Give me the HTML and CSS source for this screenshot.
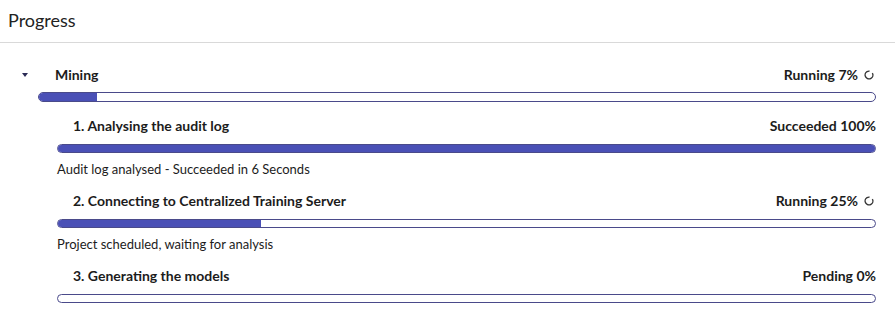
FILE: index.html
```html
<!DOCTYPE html>
<html>
<head>
<meta charset="utf-8">
<link rel="stylesheet" href="styles.css">
</head>
<body>
<div class="header">Progress</div>
<div class="group">
  <div class="caret-col"><span class="caret"></span></div>
  <div class="group-body">
    <div class="row-head">
      <span class="title main-title">Mining</span>
      <span class="status">Running 7%<svg class="spin" width="10" height="10" viewBox="0 0 10 10"><circle cx="5" cy="5" r="3.9" fill="none" stroke="#333" stroke-width="1.4" stroke-dasharray="20.5 4" transform="rotate(-30 5 5)"/></svg></span>
    </div>
    <div class="bar big"><div class="fill" style="width:7%"></div></div>

    <div class="steps">
      <div class="step">
        <div class="row-head">
          <span class="title step-title">1. Analysing the audit log</span>
          <span class="status">Succeeded 100%</span>
        </div>
        <div class="bar"><div class="fill full" style="width:100%"></div></div>
        <div class="desc">Audit log analysed - Succeeded in 6 Seconds</div>
      </div>
      <div class="step">
        <div class="row-head">
          <span class="title step-title">2. Connecting to Centralized Training Server</span>
          <span class="status">Running 25%<svg class="spin" width="10" height="10" viewBox="0 0 10 10"><circle cx="5" cy="5" r="3.9" fill="none" stroke="#333" stroke-width="1.4" stroke-dasharray="20.5 4" transform="rotate(-30 5 5)"/></svg></span>
        </div>
        <div class="bar"><div class="fill" style="width:25%"></div></div>
        <div class="desc">Project scheduled, waiting for analysis</div>
      </div>
      <div class="step">
        <div class="row-head">
          <span class="title step-title">3. Generating the models</span>
          <span class="status">Pending 0%</span>
        </div>
        <div class="bar"><div class="fill" style="width:0%"></div></div>
      </div>
    </div>
  </div>
</div>
</body>
</html>
```
FILE: styles.css
```css
* { box-sizing: border-box; }
body {
  margin: 0;
  background: #fff;
  font-family: Lato, "Open Sans", sans-serif;
  color: #1c1c1c;
}
.header {
  height: 43px;
  border-bottom: 1px solid #d9d9d9;
  padding-left: 8px;
  font-size: 18px;
  line-height: 40px;
  color: #222;
}
.group {
  display: flex;
  padding: 22px 19px 0 22px;
}
.caret-col {
  width: 16px;
  flex: none;
  padding-top: 8px;
}
.caret {
  display: block;
  width: 0;
  height: 0;
  border-left: 3.5px solid transparent;
  border-right: 3.5px solid transparent;
  border-top: 4.5px solid #2b2b55;
}
.group-body { flex: 1; }
.row-head {
  display: flex;
  justify-content: space-between;
  align-items: center;
  height: 20px;
  line-height: 20px;
  font-size: 14px;
  font-weight: 700;
}
.main-title { padding-left: 17px; }
.step-title { padding-left: 16px; }
.status { display: flex; align-items: center; }
.spin { margin-left: 6px; margin-right: 2px; }
.bar {
  margin-top: 8px;
  height: 9px;
  border: 1px solid #4a4a8a;
  border-radius: 5px;
  overflow: hidden;
  background: #fff;
}
.bar.big { margin-top: 7px; height: 10px; }
.fill {
  background: #4a50b6;
  margin: -1px 0 0 -1px;
  height: calc(100% + 2px);
}
.fill.full { width: calc(100% + 2px) !important; }
.steps { padding-left: 19px; }
.step { margin-top: 14px; }
.step + .step { margin-top: 13px; }
.desc {
  margin-top: 7px;
  font-size: 13px;
  line-height: 18px;
}
```
